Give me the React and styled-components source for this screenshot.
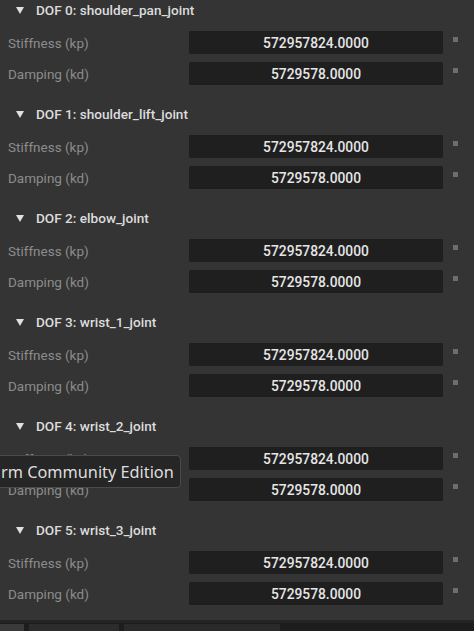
import React from "react";
import styled, { createGlobalStyle } from "styled-components";

const Global = createGlobalStyle`
  html, body { margin: 0; padding: 0; background: #343434; }
  body { width: 474px; height: 631px; overflow: hidden; font-family: Roboto, "Noto Sans", sans-serif; }
`;

const Page = styled.div`
  position: relative;
  width: 474px;
  height: 631px;
  background: #343434;
  display: flex;
  flex-direction: column;
  overflow: hidden;
`;

const List = styled.div`
  display: flex;
  flex-direction: column;
  flex: 1;
`;

const Section = styled.div`
  height: 104px;
  display: flex;
  flex-direction: column;
`;

const Header = styled.div`
  height: 20px;
  display: flex;
  align-items: center;
  padding-left: 16px;
  gap: 12px;
  color: #dcdcdc;
  font-size: 13.6px;
  font-weight: 500;
  margin-bottom: 11px;
`;

const Triangle = styled.span`
  width: 0;
  height: 0;
  border-left: 4px solid transparent;
  border-right: 4px solid transparent;
  border-top: 7px solid #e0e0e0;
  margin-top: 1px;
`;

const Rows = styled.div`
  display: flex;
  flex-direction: column;
  gap: 8px;
`;

const Row = styled.div`
  height: 23px;
  display: grid;
  grid-template-columns: 189px 254px 1fr;
  align-items: center;
`;

const Label = styled.div`
  padding-left: 8px;
  color: #8c8c8c;
  font-size: 13.5px;
`;

const Field = styled.div`
  height: 23px;
  background: #1f1f1f;
  border-radius: 1px;
  display: flex;
  align-items: center;
  justify-content: center;
  color: #e6e6e6;
  font-size: 13.8px;
  font-weight: 500;
`;

const Dot = styled.span`
  width: 5px;
  height: 5px;
  background: #6e6e6e;
  justify-self: start;
  margin-left: 10px;
  margin-top: -6px;
`;

const Divider = styled.div`
  height: 3px;
  background: #242424;
  margin-top: -10px;
`;

const TabBar = styled.div`
  height: 7px;
  background: #1d1d1d;
  display: flex;
  gap: 5px;
  padding-top: 1px;
`;

const Tab = styled.div`
  width: ${(p) => p.w}px;
  background: ${(p) => p.c};
`;

const Tooltip = styled.div`
  position: absolute;
  left: -12px;
  top: 455px;
  height: 33px;
  width: 193px;
  box-sizing: border-box;
  padding-left: 12px;
  background: #262626;
  border: 1px solid #4a4a4a;
  border-radius: 4px;
  display: flex;
  align-items: center;
  color: #dedede;
  font-family: "Noto Sans", "DejaVu Sans", sans-serif;
  font-size: 16.3px;
  white-space: nowrap;
`;

const dofs = [
  "shoulder_pan_joint",
  "shoulder_lift_joint",
  "elbow_joint",
  "wrist_1_joint",
  "wrist_2_joint",
  "wrist_3_joint",
];

export default function App() {
  return (
    <Page>
      <Global />
      <List>
        {dofs.map((name, i) => (
          <Section key={name}>
            <Header>
              <Triangle />
              <span>{`DOF ${i}: ${name}`}</span>
            </Header>
            <Rows>
              <Row>
                <Label>Stiffness (kp)</Label>
                <Field>572957824.0000</Field>
                <Dot />
              </Row>
              <Row>
                <Label>Damping (kd)</Label>
                <Field>5729578.0000</Field>
                <Dot />
              </Row>
            </Rows>
          </Section>
        ))}
      </List>
      <Divider />
      <TabBar>
        <Tab w={24} c="#3a3a3a" />
        <Tab w={90} c="#2c2c2c" />
        <Tab w={156} c="#2a2a2a" />
      </TabBar>
      <Tooltip>rm Community Edition</Tooltip>
    </Page>
  );
}
